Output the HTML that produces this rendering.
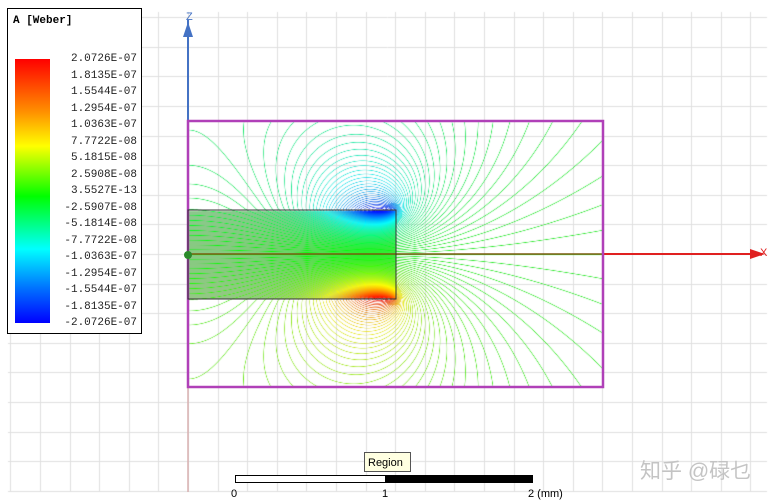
<!DOCTYPE html>
<html><head><meta charset="utf-8"><style>
html,body{margin:0;padding:0;background:#fff;width:769px;height:502px;overflow:hidden;position:relative;font-family:"Liberation Sans",sans-serif}
canvas,svg{position:absolute;left:0;top:0}
#leg{position:absolute;left:7px;top:8px;width:133px;height:324px;border:1px solid #000;background:#fff;font-family:"Liberation Mono",monospace;font-size:11px}
#bar{position:absolute;left:7px;top:50px;width:35px;height:264px;background:linear-gradient(to bottom,#f00 0%,#ff9000 20%,#ff0 33%,#0f0 52%,#0ff 72%,#0070ff 87%,#00f 100%)}
.lb{position:absolute;right:4px;width:100px;text-align:right;color:#222;line-height:12px}
</style></head><body>
<canvas id="c" width="769" height="502"></canvas>
<svg width="769" height="502">
<path d="M188 254V20" stroke="#4472c4" stroke-width="2"/>
<path d="M188 121V254" stroke="#4aa0b8" stroke-width="2"/>
<path d="M188 388V492" stroke="#d8b0b0" stroke-width="1.5"/>
<polygon points="183,37 188,22 193,37" fill="#4472c4"/>
<text x="186" y="20" font-size="11" fill="#4472c4" font-family="Liberation Sans">Z</text>
<path d="M188 254H603" stroke="#7a5a10" stroke-width="1.5"/>
<path d="M603 254H752" stroke="#e02020" stroke-width="2"/>
<polygon points="750,249 765,254 750,259" fill="#e02020"/>
<text x="760" y="256" font-size="11" fill="#e02020" font-family="Liberation Sans">X</text>
<rect x="188" y="121" width="415" height="266" fill="none" stroke="#b040b8" stroke-width="2.5"/>
<rect x="188" y="210" width="208" height="89" fill="none" stroke="#333" stroke-width="1"/>
<circle cx="188" cy="255" r="4" fill="#2a8a2a"/>
<rect x="235.5" y="475.5" width="150" height="7" fill="#fff" stroke="#000"/>
<rect x="385" y="475" width="148" height="8" fill="#000"/>
<text x="231" y="497" font-size="11" fill="#000">0</text>
<text x="382" y="497" font-size="11" fill="#000">1</text>
<text x="528" y="497" font-size="11" fill="#000">2 (mm)</text>
<rect x="364.5" y="452.5" width="46" height="19" fill="#ffffe1" stroke="#555"/>
<text x="368" y="466" font-size="11" fill="#000">Region</text>
<text x="640" y="478" font-size="21" fill="#c4c4c4" font-family="Liberation Sans,Noto Sans CJK SC,sans-serif">知乎 @碌乜</text>
</svg>
<div id="leg"><div style="position:absolute;left:5px;top:6px;font-weight:bold">A [Weber]</div><div id="bar"></div></div>
<script>
var L=document.getElementById('leg');
var labs=["2.0726E-07","1.8135E-07","1.5544E-07","1.2954E-07","1.0363E-07","7.7722E-08","5.1815E-08","2.5908E-08","3.5527E-13","-2.5907E-08","-5.1814E-08","-7.7722E-08","-1.0363E-07","-1.2954E-07","-1.5544E-07","-1.8135E-07","-2.0726E-07"];
labs.forEach(function(s,i){var d=document.createElement('div');d.className='lb';d.style.top=(44+i*16.5)+'px';d.textContent=s;L.appendChild(d);});
var c=document.getElementById('c').getContext('2d');
c.fillStyle='#fff';c.fillRect(0,0,769,502);
c.strokeStyle='#e0e0e0';c.lineWidth=1;c.beginPath();
for(var k=-6;k<=19;k++){var x=Math.round(188+29.6*k)+.5;if(x<8||x>767)continue;c.moveTo(x,12);c.lineTo(x,492);}
for(var k=-8;k<=8;k++){var y=Math.round(254+29.6*k)+.5;if(y<12||y>494)continue;c.moveTo(8,y);c.lineTo(767,y);}
c.stroke();
var S=[];for(var i=0;i<50;i++){var u=(i+0.5)/50*208;var w=Math.pow(u/208,4)+0.03;S.push([u,w]);S.push([-u,w]);}
function A(u,v){var s=0;for(var i=0;i<S.length;i++){var du=u-S[i][0];var a=du*du+(v+44.5)*(v+44.5)+1,b=du*du+(v-44.5)*(v-44.5)+1;s+=S[i][1]*0.5*(Math.log(a)-Math.log(b));}return s;}
var mx=Math.abs(A(195,44.5));
var N=42;
var img=c.getImageData(0,0,769,502),d=img.data;
function col(t){t=Math.max(0,Math.min(0.999,t));var h=240*(1-t)/60;var r,g,b;var f=h-Math.floor(h);var q=1-f;switch(Math.floor(h)){case 0:r=1;g=f;b=0;break;case 1:r=q;g=1;b=0;break;case 2:r=0;g=1;b=f;break;case 3:r=0;g=q;b=1;break;default:r=0;g=0;b=1;}return [r*255,g*255,b*255];}
for(var y=122;y<387;y++)for(var x=189;x<603;x++){var u=x-188,v=y-254;var a=A(u,v)/mx;var ax=A(u+1,v)/mx-a,ay=A(u,v+1)/mx-a;var g=Math.sqrt(ax*ax+ay*ay)*N;var f=a*N;var dd=Math.abs(f-Math.round(f));var inm=(x<396&&y>210&&y<299);var ca=(a<0?-1:1)*Math.pow(Math.abs(a),1.5);var cc=col((ca+1)/2);var p=(y*769+x)*4;
var alpha=Math.max(0,1-dd/Math.max(g,1e-6)/0.6);if(g>0.9)alpha=Math.max(alpha,0.8);
d[p+3]=255;
if(inm){var br=[168,188,160];var m=Math.max(alpha,Math.min(1,g*0.9));d[p]=br[0]*(1-m)+cc[0]*m;d[p+1]=br[1]*(1-m)+cc[1]*m;d[p+2]=br[2]*(1-m)+cc[2]*m;}
else if(alpha>0){var lc=[cc[0]*0.8+30,cc[1]*0.75+40,cc[2]*0.8+30];d[p]=d[p]*(1-alpha)+lc[0]*alpha;d[p+1]=d[p+1]*(1-alpha)+lc[1]*alpha;d[p+2]=d[p+2]*(1-alpha)+lc[2]*alpha;}}
c.putImageData(img,0,0);
</script>
</body></html>
